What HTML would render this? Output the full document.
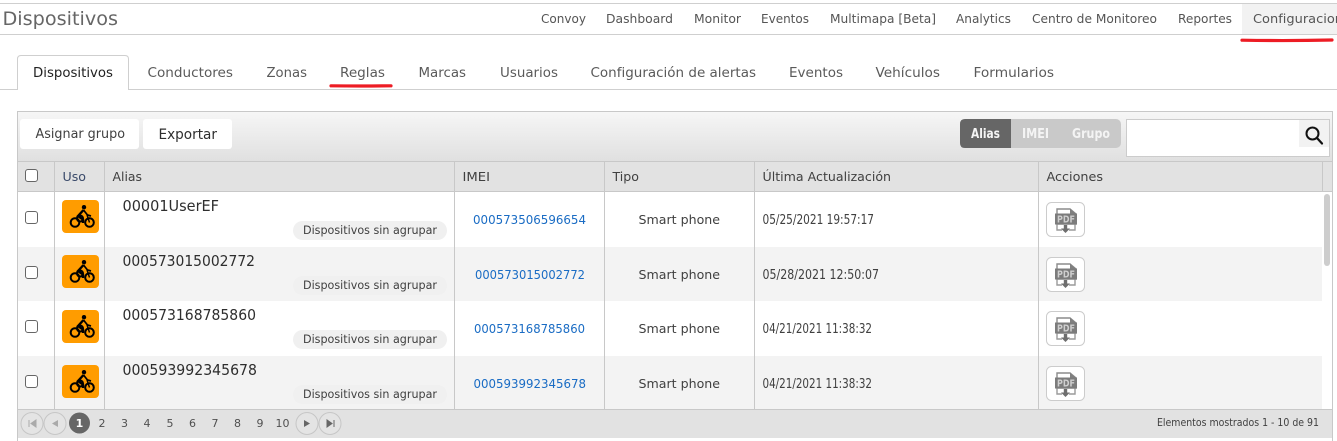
<!DOCTYPE html>
<html lang="es">
<head>
<meta charset="utf-8">
<title>Dispositivos</title>
<style>
html,body{margin:0;padding:0;background:#fff;width:1337px;height:441px;overflow:hidden}
svg{display:block}
text{font-family:"DejaVu Sans","Liberation Sans",sans-serif;font-size:12.5px;fill:#555;white-space:pre}
.nav{font-size:12.8px;fill:#555}
.tab{font-size:13.3px;fill:#5a5a5a}
.th{font-size:12.8px;fill:#404040}
.al{font-size:14.8px;fill:#2e2e2e}
.bd{font-size:11.3px;fill:#404040}
.lk{font-size:12.8px;fill:#1a6cc4}
.td{font-size:12.8px;fill:#404040}
.dt{font-size:13.4px;fill:#404040}
.pg{font-size:11px;fill:#505050;text-anchor:middle}
.sg{font-size:13.4px;font-weight:bold;fill:#f4f4f4}
</style>
</head>
<body>
<svg width="1337" height="441" viewBox="0 0 1337 441" xmlns="http://www.w3.org/2000/svg">
<defs>
<linearGradient id="g" x1="0" y1="0" x2="0" y2="1"><stop offset="0" stop-color="#f6f6f6"/><stop offset="1" stop-color="#e0e0e0"/></linearGradient>
<g id="cb"><rect x="0.5" y="0.5" width="12" height="12" rx="2.5" fill="#fff" stroke="#666"/></g>
<g id="bike">
<rect width="37" height="33" rx="4" fill="#ff9c00"/>
<g fill="none" stroke="#000" stroke-width="2">
<circle cx="13" cy="22.5" r="4.3"/><circle cx="27.5" cy="22.5" r="4.3"/><circle cx="18" cy="18.5" r="3"/>
<path d="M21.5 10 L16 16 L21 19.5 L21 23" stroke-width="2.4"/><path d="M21.5 10 L25.5 15 L29 16" stroke-width="1.7"/><path d="M25 15 L27.5 22.5" stroke-width="1.4"/>
</g>
<circle cx="22" cy="7.2" r="2.2" fill="#000"/>
</g>
<g id="pdf">
<rect x="0.5" y="0.5" width="38" height="34" rx="5" fill="#fff" stroke="#ccc"/>
<g style="filter:blur(0.35px)">
<path d="M11 7 H24 L30 12 V22 H11 Z" fill="#fff" stroke="#8c8c8c" stroke-width="1.4"/>
<path d="M24 6.5 L30 12 H24 Z" fill="#808080"/>
<rect x="9" y="11.500" width="22" height="11" fill="#7c7c7c"/>
<text x="20" y="20.500" style="font-size:9.5px;font-weight:bold;fill:#cfcfcf;text-anchor:middle" textLength="18" lengthAdjust="spacingAndGlyphs">PDF</text>
<path d="M11 22.500 V28 H16 M29 22.500 V28 H23" fill="none" stroke="#9a9a9a" stroke-width="1.4"/>
<path d="M17.800 23 H21.200 V26.500 H24 L19.500 31 L15 26.500 H17.800 Z" fill="#6e6e6e"/>
</g>
</g>
<g id="badge"><rect width="154" height="19" rx="9.500" fill="#f0f0f0"/><text class="bd" x="10" y="13" textLength="134" lengthAdjust="spacingAndGlyphs">Dispositivos sin agrupar</text></g>
<g id="circ"><circle r="11" fill="#e4e4e4" stroke="#c6c6c6"/></g>
</defs>

<!-- top bar -->
<rect x="0" y="3" width="1337" height="1" fill="#cfcfcf"/>
<rect x="0" y="34" width="1337" height="1" fill="#cfcfcf"/>
<rect x="1242" y="4" width="95" height="30" fill="#f2f2f2"/>
<text x="2.500" y="25" style="font-size:19px;fill:#666" textLength="115.500" lengthAdjust="spacingAndGlyphs">Dispositivos</text>
<text class="nav" x="541" y="23" textLength="45" lengthAdjust="spacingAndGlyphs">Convoy</text>
<text class="nav" x="606" y="23" textLength="67" lengthAdjust="spacingAndGlyphs">Dashboard</text>
<text class="nav" x="694" y="23" textLength="47" lengthAdjust="spacingAndGlyphs">Monitor</text>
<text class="nav" x="761" y="23" textLength="48" lengthAdjust="spacingAndGlyphs">Eventos</text>
<text class="nav" x="830" y="23" textLength="106" lengthAdjust="spacingAndGlyphs">Multimapa [Beta]</text>
<text class="nav" x="956" y="23" textLength="55" lengthAdjust="spacingAndGlyphs">Analytics</text>
<text class="nav" x="1032" y="23" textLength="125" lengthAdjust="spacingAndGlyphs">Centro de Monitoreo</text>
<text class="nav" x="1178" y="23" textLength="54" lengthAdjust="spacingAndGlyphs">Reportes</text>
<text class="nav" x="1253" y="23" textLength="90" lengthAdjust="spacingAndGlyphs">Configuracion</text>
<path d="M1242 40.200 Q1288 41 1332 40" fill="none" stroke="#ed1c24" stroke-width="3.2" stroke-linecap="round"/>

<!-- tabs -->
<rect x="0" y="89" width="1337" height="1" fill="#cfcfcf"/>
<path d="M17.500 90 V59 Q17.500 55.500 21 55.500 H125 Q128.500 55.500 128.500 59 V90" fill="#fff" stroke="#cfcfcf"/>
<text class="tab" style="fill:#222" x="33" y="77" textLength="80" lengthAdjust="spacingAndGlyphs">Dispositivos</text>
<text class="tab" x="147.500" y="77" textLength="85.500" lengthAdjust="spacingAndGlyphs">Conductores</text>
<text class="tab" x="266.500" y="77" textLength="40.500" lengthAdjust="spacingAndGlyphs">Zonas</text>
<text class="tab" x="340" y="77" textLength="45" lengthAdjust="spacingAndGlyphs">Reglas</text>
<text class="tab" x="418.500" y="77" textLength="47.500" lengthAdjust="spacingAndGlyphs">Marcas</text>
<text class="tab" x="500" y="77" textLength="58" lengthAdjust="spacingAndGlyphs">Usuarios</text>
<text class="tab" x="590.500" y="77" textLength="165.500" lengthAdjust="spacingAndGlyphs">Configuración de alertas</text>
<text class="tab" x="789" y="77" textLength="54" lengthAdjust="spacingAndGlyphs">Eventos</text>
<text class="tab" x="875.500" y="77" textLength="64.500" lengthAdjust="spacingAndGlyphs">Vehículos</text>
<text class="tab" x="973.500" y="77" textLength="80.500" lengthAdjust="spacingAndGlyphs">Formularios</text>
<path d="M331 85.800 Q361 86.200 391 85.800" fill="none" stroke="#ed1c24" stroke-width="3.2" stroke-linecap="round"/>

<!-- panel -->
<rect x="17.500" y="111.500" width="1315" height="340" fill="#fff" stroke="#c8c8c8"/>
<rect x="18" y="112" width="1314" height="49" fill="url(#g)"/>
<rect x="20" y="119" width="119" height="30" rx="3" fill="#fff"/>
<text x="35.500" y="138" style="font-size:13.3px;fill:#404040" textLength="89.500" lengthAdjust="spacingAndGlyphs">Asignar grupo</text>
<rect x="143" y="119" width="89" height="30" rx="3" fill="#fff"/>
<text x="158.500" y="139" style="font-size:14.3px;fill:#2e2e2e" textLength="58.500" lengthAdjust="spacingAndGlyphs">Exportar</text>
<rect x="960" y="119" width="161" height="29" rx="5" fill="#c9c9c9"/>
<path d="M1011 119 H965 Q960 119 960 124 V143 Q960 148 965 148 H1011 Z" fill="#666"/>
<text class="sg" x="971" y="138" textLength="29" lengthAdjust="spacingAndGlyphs">Alias</text>
<text class="sg" x="1022" y="138" textLength="27" lengthAdjust="spacingAndGlyphs">IMEI</text>
<text class="sg" x="1072" y="138" textLength="38" lengthAdjust="spacingAndGlyphs">Grupo</text>
<rect x="1126.500" y="119.500" width="203" height="37" fill="#fff" stroke="#ccc"/>
<rect x="1299" y="120" width="30" height="27" fill="#f2f2f2"/>
<circle cx="1312.500" cy="133.500" r="6" fill="none" stroke="#111" stroke-width="2"/>
<path d="M1317 138 L1322 143.500" stroke="#111" stroke-width="2.200" stroke-linecap="round"/>

<!-- table header -->
<rect x="18" y="161" width="1314" height="1" fill="#c8c8c8"/>
<rect x="18" y="162" width="1314" height="29" fill="#e2e2e2"/>
<rect x="18" y="191" width="1314" height="1" fill="#c8c8c8"/>

<!-- rows -->
<rect x="18" y="247" width="1304" height="54" fill="#f3f3f3"/>
<rect x="18" y="356" width="1304" height="53" fill="#f3f3f3"/>

<!-- columns -->
<g fill="#c8c8c8">
<rect x="54" y="162" width="1" height="247"/>
<rect x="104" y="162" width="1" height="247"/>
<rect x="454" y="162" width="1" height="247"/>
<rect x="604" y="162" width="1" height="247"/>
<rect x="754" y="162" width="1" height="247"/>
<rect x="1038" y="162" width="1" height="247"/>
<rect x="1322" y="162" width="1" height="29"/>
</g>

<use href="#cb" x="25" y="169"/>
<text class="th" style="fill:#3a4a6a" x="62.500" y="181" textLength="23.500" lengthAdjust="spacingAndGlyphs">Uso</text>
<text class="th" x="112.500" y="181" textLength="29.500" lengthAdjust="spacingAndGlyphs">Alias</text>
<text class="th" x="462.500" y="181" textLength="27.500" lengthAdjust="spacingAndGlyphs">IMEI</text>
<text class="th" x="612.500" y="181" textLength="26.500" lengthAdjust="spacingAndGlyphs">Tipo</text>
<text class="th" x="762.500" y="181" textLength="128.500" lengthAdjust="spacingAndGlyphs">Última Actualización</text>
<text class="th" x="1046.500" y="181" textLength="56.500" lengthAdjust="spacingAndGlyphs">Acciones</text>

<!-- row 1 -->
<use href="#cb" x="25" y="211"/>
<use href="#bike" x="62" y="200"/>
<text class="al" x="122.500" y="211" textLength="96.500" lengthAdjust="spacingAndGlyphs">00001UserEF</text>
<use href="#badge" x="293" y="221"/>
<text class="lk" x="473" y="224" textLength="113" lengthAdjust="spacingAndGlyphs">000573506596654</text>
<text class="td" x="638.500" y="224" textLength="81.500" lengthAdjust="spacingAndGlyphs">Smart phone</text>
<text class="dt" x="762.500" y="224" textLength="111.500" lengthAdjust="spacingAndGlyphs">05/25/2021 19:57:17</text>
<use href="#pdf" x="1046" y="202"/>

<!-- row 2 -->
<use href="#cb" x="25" y="266"/>
<use href="#bike" x="62" y="255"/>
<text class="al" x="122.500" y="266" textLength="132.500" lengthAdjust="spacingAndGlyphs">000573015002772</text>
<use href="#badge" x="293" y="276"/>
<text class="lk" x="475" y="279" textLength="110" lengthAdjust="spacingAndGlyphs">000573015002772</text>
<text class="td" x="638.500" y="279" textLength="81.500" lengthAdjust="spacingAndGlyphs">Smart phone</text>
<text class="dt" x="762.500" y="279" textLength="116.500" lengthAdjust="spacingAndGlyphs">05/28/2021 12:50:07</text>
<use href="#pdf" x="1046" y="257"/>

<!-- row 3 -->
<use href="#cb" x="25" y="320"/>
<use href="#bike" x="62" y="310"/>
<text class="al" x="122.500" y="320" textLength="133.500" lengthAdjust="spacingAndGlyphs">000573168785860</text>
<use href="#badge" x="293" y="330"/>
<text class="lk" x="474" y="333" textLength="111" lengthAdjust="spacingAndGlyphs">000573168785860</text>
<text class="td" x="638.500" y="333" textLength="81.500" lengthAdjust="spacingAndGlyphs">Smart phone</text>
<text class="dt" x="762.500" y="333" textLength="109.500" lengthAdjust="spacingAndGlyphs">04/21/2021 11:38:32</text>
<use href="#pdf" x="1046" y="311"/>

<!-- row 4 -->
<use href="#cb" x="25" y="375"/>
<use href="#bike" x="62" y="365"/>
<text class="al" x="122.500" y="375" textLength="134.500" lengthAdjust="spacingAndGlyphs">000593992345678</text>
<use href="#badge" x="293" y="385"/>
<text class="lk" x="473.500" y="388" textLength="112.500" lengthAdjust="spacingAndGlyphs">000593992345678</text>
<text class="td" x="638.500" y="388" textLength="81.500" lengthAdjust="spacingAndGlyphs">Smart phone</text>
<text class="dt" x="762.500" y="388" textLength="109.500" lengthAdjust="spacingAndGlyphs">04/21/2021 11:38:32</text>
<use href="#pdf" x="1046" y="366"/>

<!-- scrollbar -->
<rect x="1324" y="194" width="6" height="72" rx="3" fill="#cdcdcd"/>

<!-- footer -->
<rect x="18" y="409" width="1314" height="1" fill="#c8c8c8"/>
<rect x="18" y="410" width="1314" height="28" fill="#e2e2e2"/>
<rect x="18" y="438" width="1314" height="3" fill="#fff"/>
<use href="#circ" x="32" y="423.500"/>
<use href="#circ" x="55" y="423.500"/>
<use href="#circ" x="307" y="423.500"/>
<use href="#circ" x="330" y="423.500"/>
<path d="M29 420 V427 M36 420 V427 L31 423.500 Z" fill="#aaa" stroke="#aaa"/>
<path d="M58 420 V427 L52 423.500 Z" fill="#aaa"/>
<path d="M304 420 V427 L310 423.500 Z" fill="#666"/>
<path d="M327 420 V427 L332 423.500 Z M334 420 V427" fill="#666" stroke="#666"/>
<circle cx="79.500" cy="423" r="10.500" fill="#666"/>
<text class="pg" style="fill:#fff;font-weight:bold" x="79.500" y="427">1</text>
<text class="pg" x="102" y="427">2</text>
<text class="pg" x="124.500" y="427">3</text>
<text class="pg" x="147" y="427">4</text>
<text class="pg" x="170" y="427">5</text>
<text class="pg" x="192.500" y="427">6</text>
<text class="pg" x="215" y="427">7</text>
<text class="pg" x="237.500" y="427">8</text>
<text class="pg" x="260" y="427">9</text>
<text class="pg" x="282.500" y="427">10</text>
<text x="1157" y="426" style="font-size:11px;fill:#404040" textLength="162" lengthAdjust="spacingAndGlyphs">Elementos mostrados 1 - 10 de 91</text>
</svg>
</body>
</html>
